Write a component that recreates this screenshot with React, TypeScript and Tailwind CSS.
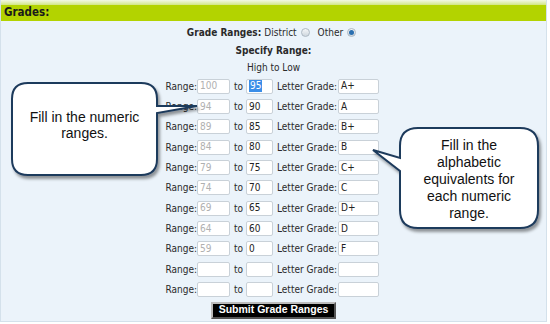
import React from "react";

const ROWS: { from: string; to: string; grade: string }[] = [
  { from: "100", to: "95", grade: "A+" },
  { from: "94", to: "90", grade: "A" },
  { from: "89", to: "85", grade: "B+" },
  { from: "84", to: "80", grade: "B" },
  { from: "79", to: "75", grade: "C+" },
  { from: "74", to: "70", grade: "C" },
  { from: "69", to: "65", grade: "D+" },
  { from: "64", to: "60", grade: "D" },
  { from: "59", to: "0", grade: "F" },
  { from: "", to: "", grade: "" },
  { from: "", to: "", grade: "" },
];

function Box({ value, className, muted, selected }: { value: string; className: string; muted?: boolean; selected?: boolean }) {
  return (
    <div
      className={[
        "flex h-[15px] shrink-0 items-center rounded-[2px] border border-[#c9d1d8] bg-white pl-[2px] text-[10px] leading-none",
        muted ? "text-[#b0b0b0]" : "text-[#222]",
        className,
      ].join(" ")}
    >
      {selected ? <span className="bg-[#3b8ee8] px-[1px] py-[1px] text-white">{value}</span> : value}
    </div>
  );
}

function Radio({ checked }: { checked?: boolean }) {
  return (
    <span className="mx-[4px] inline-flex h-[9px] w-[9px] items-center justify-center rounded-full border border-[#aeb9c3] bg-gradient-to-b from-[#f4f6f8] to-[#cfd7de]">
      {checked && <span className="h-[5px] w-[5px] rounded-full bg-[#2a6fb0]" />}
    </span>
  );
}

function Callouts() {
  return (
    <div className="pointer-events-none absolute inset-0">
      <svg width="550" height="324" className="absolute left-0 top-0">
        <defs>
          <filter id="sh" x="-20%" y="-20%" width="140%" height="140%">
            <feDropShadow dx="2" dy="3" stdDeviation="1.6" floodColor="#000" floodOpacity="0.4" />
          </filter>
        </defs>
        <path
          d="M28 83 H141 Q157 83 157 99 V106 L197 106 L157 113 V159 Q157 175 141 175 H28 Q12 175 12 159 V99 Q12 83 28 83 Z"
          fill="#fff"
          stroke="#1f3a5c"
          strokeWidth="2"
          filter="url(#sh)"
        />
        <path
          d="M418 128 H520 Q538 128 538 146 V210 Q538 228 520 228 H418 Q400 228 400 210 V171 L373 150 L400 158 V146 Q400 128 418 128 Z"
          fill="#fff"
          stroke="#1f3a5c"
          strokeWidth="2"
          filter="url(#sh)"
        />
      </svg>
      <div className="absolute left-[12px] top-[109px] w-[145px] text-center font-['Liberation_Sans',Arial,sans-serif] text-[14px] leading-[16px] text-[#111]">
        Fill in the numeric
        <br />
        ranges.
      </div>
      <div className="absolute left-[400px] top-[137px] w-[138px] text-center font-['Liberation_Sans',Arial,sans-serif] text-[14px] leading-[17px] text-[#111]">
        Fill in the
        <br />
        alphabetic
        <br />
        equivalents for
        <br />
        each numeric
        <br />
        range.
      </div>
    </div>
  );
}

export default function App() {
  return (
    <div className="relative h-[324px] w-[550px] bg-white font-['DejaVu_Sans_Condensed','DejaVu_Sans',Verdana,sans-serif] text-[10px] text-[#2a2a2a]">
      <div className="h-[322px] w-[547px] border-b border-l border-r border-[#d4e1eb] bg-[#ebf3fa]">
        <div className="h-[5px] bg-gradient-to-b from-[#f3f8e4] to-[#d2e682]" />
        <div className="flex h-[16px] items-center bg-[#b3d300] pl-[3px] text-[11.5px] font-bold text-[#1a1a1a]">
          Grades:
        </div>
        <div className="flex flex-col items-center pt-[2px]">
          <div className="flex h-[18px] items-center">
            <span className="font-bold">Grade Ranges:</span>
            <span className="ml-[3px]">District</span>
            <Radio />
            <span className="ml-[4px]">Other</span>
            <Radio checked />
          </div>
          <div className="flex h-[18px] items-center font-bold">Specify Range:</div>
          <div className="flex h-[17px] items-center">High to Low</div>
          {ROWS.map((r, i) => (
            <div key={i} className="flex h-[20.35px] w-[211px] items-center">
              <span className="flex w-[29px] shrink-0 justify-end whitespace-nowrap">Range:</span>
              <Box value={r.from} muted className="w-[33px]" />
              <span className="ml-[4px] w-[12px] shrink-0">to</span>
              <Box value={r.to} selected={i === 0} className="w-[27px]" />
              <span className="ml-[4px] w-[61px] shrink-0 whitespace-nowrap">Letter Grade:</span>
              <Box value={r.grade} className="w-[41px]" />
            </div>
          ))}
          <button className="mt-[2px] flex h-[17px] w-[125px] items-center justify-center border-2 border-b-[#555] border-l-[#bbb] border-r-[#555] border-t-[#bbb] bg-black font-['Liberation_Sans',Arial,sans-serif] text-[10.5px] font-bold text-white">
            Submit Grade Ranges
          </button>
        </div>
      </div>
      <Callouts />
    </div>
  );
}
